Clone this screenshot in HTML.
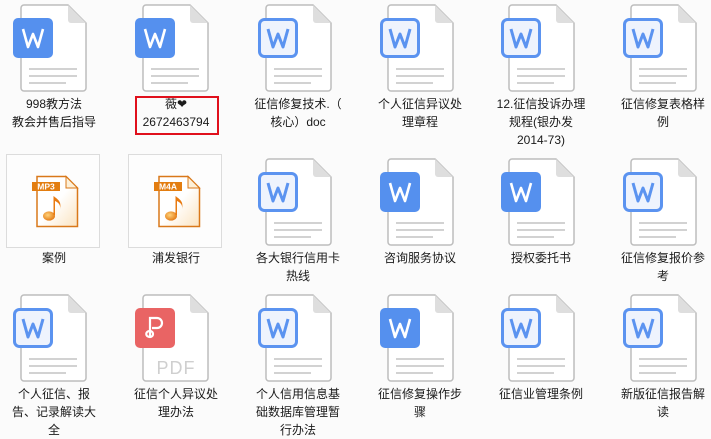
<!DOCTYPE html>
<html><head><meta charset="utf-8">
<style>
html,body{margin:0;padding:0;}
body{width:711px;height:438px;background:#fbfbfb;position:relative;overflow:hidden;font-family:"Liberation Sans","Noto Sans CJK SC",sans-serif;}
.ic{position:absolute;width:80px;height:92px;}
.lb{position:absolute;width:110px;text-align:center;font-size:12px;line-height:18px;color:#1a1a1a;}
.box{position:absolute;width:94px;height:94px;border:1px solid #dcdcdc;background:#fdfdfd;box-sizing:border-box;}
</style></head><body>
<svg width="0" height="0" style="position:absolute">
<defs>
<symbol id="pg" viewBox="0 0 80 92">
<path d="M13,2 H57 L75,20 V85 a3,3 0 0 1 -3,3 H13 a3,3 0 0 1 -3,-3 V5 a3,3 0 0 1 3,-3z" fill="#fff" stroke="#bdbdbd" stroke-width="1.5"/>
<path d="M57,2 V17 a3,3 0 0 0 3,3 H75 z" fill="#dedede"/>
</symbol>
<symbol id="ln" viewBox="0 0 80 92">
<path d="M18,66 H66 M18,73 H66 M18,80 H55" stroke="#d2d2d2" stroke-width="2"/>
</symbol>
<symbol id="wf" viewBox="0 0 80 92">
<rect x="2" y="15" width="40" height="40" rx="5" fill="#5590ee"/>
<path d="M12,26 L17,44 L22,31 L27,44 L32,26" fill="none" stroke="#fff" stroke-width="2.6" stroke-linejoin="round"/>
</symbol>
<symbol id="wo" viewBox="0 0 80 92">
<rect x="3.5" y="16.5" width="37" height="37" rx="5" fill="#eef3fd" stroke="#5b93f0" stroke-width="3"/>
<path d="M12,26 L17,44 L22,31 L27,44 L32,26" fill="none" stroke="#5b93f0" stroke-width="3" stroke-linejoin="round"/>
</symbol>
</defs>
</svg>

<!-- Row 1 -->
<svg class="ic" style="left:11px;top:3px"><use href="#pg"/><use href="#ln"/><use href="#wf"/></svg>
<svg class="ic" style="left:133px;top:3px"><use href="#pg"/><use href="#ln"/><use href="#wf"/></svg>
<svg class="ic" style="left:256px;top:3px"><use href="#pg"/><use href="#ln"/><use href="#wo"/></svg>
<svg class="ic" style="left:378px;top:3px"><use href="#pg"/><use href="#ln"/><use href="#wo"/></svg>
<svg class="ic" style="left:499px;top:3px"><use href="#pg"/><use href="#ln"/><use href="#wo"/></svg>
<svg class="ic" style="left:621px;top:3px"><use href="#pg"/><use href="#ln"/><use href="#wo"/></svg>

<div class="lb" style="left:-1px;top:95px">998教方法<br>教会并售后指导</div>
<div class="lb" style="left:121px;top:95px">薇❤<br>2672463794</div>
<div style="position:absolute;left:135px;top:96px;width:80px;height:35px;border:2px solid #e0101c;"></div>
<div class="lb" style="left:243px;top:95px">征信修复技术.（<br>核心）doc</div>
<div class="lb" style="left:365px;top:95px">个人征信异议处<br>理章程</div>
<div class="lb" style="left:486px;top:95px">12.征信投诉办理<br>规程(银办发<br>2014-73)</div>
<div class="lb" style="left:608px;top:95px">征信修复表格样<br>例</div>

<!-- Row 2 -->
<div class="box" style="left:6px;top:154px"></div>
<div class="box" style="left:128px;top:154px"></div>
<svg style="position:absolute;left:30px;top:174px" width="52" height="56" viewBox="0 0 52 56">
<defs><linearGradient id="og" x1="0" y1="0" x2="1" y2="1"><stop offset="0.5" stop-color="#fff"/><stop offset="1" stop-color="#fbe3bf"/></linearGradient>
<radialGradient id="nt" cx="0.4" cy="0.4" r="0.7"><stop offset="0" stop-color="#ffd27a"/><stop offset="1" stop-color="#e0700a"/></radialGradient></defs>
<path d="M7,2.5 H36 L47.5,14 V52.5 H7z" fill="url(#og)" stroke="#d9781a" stroke-width="1.5"/>
<path d="M36,2.5 V14 H47.5z" fill="#fdf0d8" stroke="#d9781a" stroke-width="1"/>
<rect x="2" y="8" width="28" height="9" fill="#e37d10"/>
<text x="16" y="15.5" font-size="8.5" font-weight="bold" fill="#fff" text-anchor="middle" font-family="Liberation Sans">MP3</text>
<ellipse cx="19" cy="42" rx="6" ry="4.6" fill="url(#nt)"/>
<path d="M23.5,41 V22 C27,25 32,27 30,35 C31,30 27,28 25,27 V41z" fill="#e87a10"/>
</svg>
<svg style="position:absolute;left:152px;top:174px" width="52" height="56" viewBox="0 0 52 56">
<path d="M7,2.5 H36 L47.5,14 V52.5 H7z" fill="url(#og)" stroke="#d9781a" stroke-width="1.5"/>
<path d="M36,2.5 V14 H47.5z" fill="#fdf0d8" stroke="#d9781a" stroke-width="1"/>
<rect x="2" y="8" width="28" height="9" fill="#e37d10"/>
<text x="16" y="15.5" font-size="8.5" font-weight="bold" fill="#fff" text-anchor="middle" font-family="Liberation Sans">M4A</text>
<ellipse cx="19" cy="42" rx="6" ry="4.6" fill="url(#nt)"/>
<path d="M23.5,41 V22 C27,25 32,27 30,35 C31,30 27,28 25,27 V41z" fill="#e87a10"/>
</svg>
<svg class="ic" style="left:256px;top:157px"><use href="#pg"/><use href="#ln"/><use href="#wo"/></svg>
<svg class="ic" style="left:378px;top:157px"><use href="#pg"/><use href="#ln"/><use href="#wf"/></svg>
<svg class="ic" style="left:499px;top:157px"><use href="#pg"/><use href="#ln"/><use href="#wf"/></svg>
<svg class="ic" style="left:621px;top:157px"><use href="#pg"/><use href="#ln"/><use href="#wo"/></svg>

<div class="lb" style="left:-1px;top:249px">案例</div>
<div class="lb" style="left:121px;top:249px">浦发银行</div>
<div class="lb" style="left:243px;top:249px">各大银行信用卡<br>热线</div>
<div class="lb" style="left:365px;top:249px">咨询服务协议</div>
<div class="lb" style="left:486px;top:249px">授权委托书</div>
<div class="lb" style="left:608px;top:249px">征信修复报价参<br>考</div>

<!-- Row 3 -->
<svg class="ic" style="left:11px;top:293px"><use href="#pg"/><use href="#ln"/><use href="#wo"/></svg>
<svg class="ic" style="left:133px;top:293px"><use href="#pg"/>
<rect x="2" y="15" width="40" height="40" rx="5" fill="#e96464"/>
<path d="M17,44 V25 H24 a5,5 0 0 1 0,10 H19 M17,44 C12,44 12,38 17,38 C21,38 21,44 17,44" fill="none" stroke="#fff" stroke-width="2.2"/>
<text x="43" y="81" font-size="18" fill="#cfcfcf" text-anchor="middle" font-family="Liberation Sans" letter-spacing="1">PDF</text>
</svg>
<svg class="ic" style="left:256px;top:293px"><use href="#pg"/><use href="#ln"/><use href="#wo"/></svg>
<svg class="ic" style="left:378px;top:293px"><use href="#pg"/><use href="#ln"/><use href="#wf"/></svg>
<svg class="ic" style="left:499px;top:293px"><use href="#pg"/><use href="#ln"/><use href="#wo"/></svg>
<svg class="ic" style="left:621px;top:293px"><use href="#pg"/><use href="#ln"/><use href="#wo"/></svg>

<div class="lb" style="left:-1px;top:385px">个人征信、报<br>告、记录解读大<br>全</div>
<div class="lb" style="left:121px;top:385px">征信个人异议处<br>理办法</div>
<div class="lb" style="left:243px;top:385px">个人信用信息基<br>础数据库管理暂<br>行办法</div>
<div class="lb" style="left:365px;top:385px">征信修复操作步<br>骤</div>
<div class="lb" style="left:486px;top:385px">征信业管理条例</div>
<div class="lb" style="left:608px;top:385px">新版征信报告解<br>读</div>
</body></html>
